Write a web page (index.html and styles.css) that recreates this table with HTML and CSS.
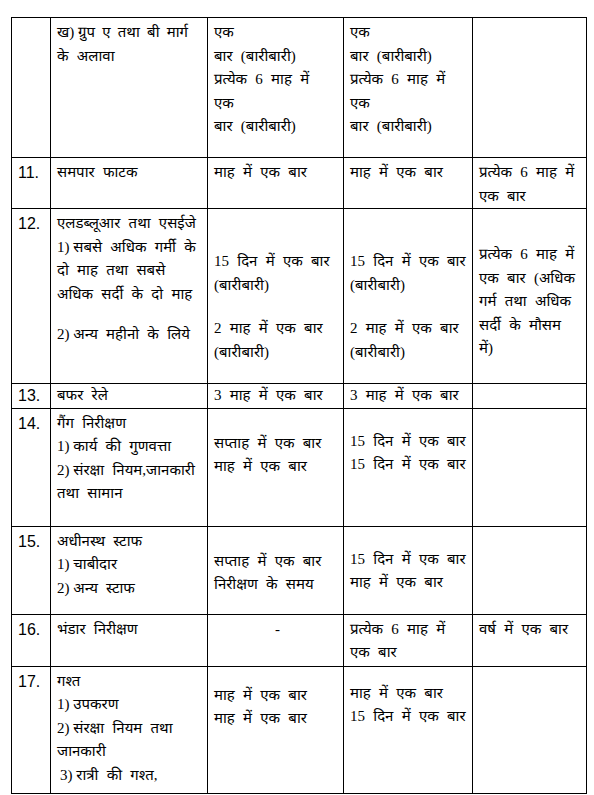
FILE: index.html
```html
<!DOCTYPE html>
<html lang="hi">
<head>
<meta charset="utf-8">
<title>निरीक्षण सारणी</title>
<link rel="stylesheet" href="styles.css">
</head>
<body>
<table class="sched">
  <colgroup>
    <col class="c-no">
    <col class="c-item">
    <col class="c-a">
    <col class="c-b">
    <col class="c-c">
  </colgroup>
  <tbody>
    <tr class="r1">
      <td class="no"></td>
      <td><div class="just"><span class="lbl">ख) </span>ग्रुप ए तथा बी मार्ग</div><div>के अलावा</div></td>
      <td><div>एक</div><div>बार (बारीबारी)</div><div>प्रत्येक 6 माह में</div><div>एक</div><div>बार (बारीबारी)</div></td>
      <td><div>एक</div><div>बार (बारीबारी)</div><div>प्रत्येक 6 माह में</div><div>एक</div><div>बार (बारीबारी)</div></td>
      <td></td>
    </tr>
    <tr class="r11">
      <td class="no">11.</td>
      <td><div>समपार फाटक</div></td>
      <td><div>माह में एक बार</div></td>
      <td><div>माह में एक बार</div></td>
      <td><div>प्रत्येक 6 माह में</div><div>एक बार</div></td>
    </tr>
    <tr class="r12">
      <td class="no">12.</td>
      <td><div>एलडब्लूआर तथा एसईजे</div><div><span class="lbl">1) </span>सबसे अधिक गर्मी के</div><div>दो माह तथा सबसे</div><div>अधिक सर्दी के दो माह</div><div class="gap"><span class="lbl">2) </span>अन्य महीनो के लिये</div></td>
      <td class="off-38"><div>15 दिन में एक बार</div><div>(बारीबारी)</div><div class="gap2">2 माह में एक बार</div><div>(बारीबारी)</div></td>
      <td class="off-38"><div>15 दिन में एक बार</div><div>(बारीबारी)</div><div class="gap2">2 माह में एक बार</div><div>(बारीबारी)</div></td>
      <td class="off-31"><div>प्रत्येक 6 माह में</div><div>एक बार (अधिक</div><div>गर्म तथा अधिक</div><div>सर्दी के मौसम</div><div>में)</div></td>
    </tr>
    <tr class="r13">
      <td class="no">13.</td>
      <td><div>बफर रेले</div></td>
      <td><div>3 माह में एक बार</div></td>
      <td><div>3 माह में एक बार</div></td>
      <td></td>
    </tr>
    <tr class="r14">
      <td class="no">14.</td>
      <td><div>गैंग निरीक्षण</div><div><span class="lbl">1) </span>कार्य की गुणवत्ता</div><div><span class="lbl">2) </span>संरक्षा नियम,जानकारी</div><div>तथा सामान</div></td>
      <td class="off-20"><div>सप्ताह में एक बार</div><div>माह में एक बार</div></td>
      <td class="off-18"><div>15 दिन में एक बार</div><div>15 दिन में एक बार</div></td>
      <td></td>
    </tr>
    <tr class="r15">
      <td class="no">15.</td>
      <td><div>अधीनस्थ स्टाफ</div><div><span class="lbl">1) </span>चाबीदार</div><div><span class="lbl">2) </span>अन्य स्टाफ</div></td>
      <td class="off-20"><div>सप्ताह में एक बार</div><div>निरीक्षण के समय</div></td>
      <td class="off-18"><div>15 दिन में एक बार</div><div>माह में एक बार</div></td>
      <td></td>
    </tr>
    <tr class="r16">
      <td class="no">16.</td>
      <td><div>भंडार निरीक्षण</div></td>
      <td class="center"><div>-</div></td>
      <td><div>प्रत्येक 6 माह में</div><div>एक बार</div></td>
      <td><div>वर्ष में एक बार</div></td>
    </tr>
    <tr class="r17">
      <td class="no">17.</td>
      <td><div>गश्त</div><div><span class="lbl">1) </span>उपकरण</div><div><span class="lbl">2) </span>संरक्षा नियम तथा</div><div>जानकारी</div><div class="indent"><span class="lbl">3) </span>रात्री की गश्त,</div></td>
      <td class="off-14"><div>माह में एक बार</div><div>माह में एक बार</div></td>
      <td class="off-12"><div>माह में एक बार</div><div>15 दिन में एक बार</div></td>
      <td></td>
    </tr>
  </tbody>
</table>
</body>
</html>
```

FILE: styles.css
```css
html, body {
  margin: 0;
  padding: 0;
  background: #ffffff;
}

body {
  font-family: "Liberation Serif", "Noto Sans Devanagari", "Lohit Devanagari", "Noto Sans", sans-serif;
  font-size: 15px;
  color: #000000;
}

.sched {
  margin: 17px 0 0 11px;
  border-collapse: collapse;
  table-layout: fixed;
  width: 575px;
}

.c-no { width: 39px; }
.c-item { width: 157px; }
.c-a { width: 136px; }
.c-b { width: 129px; }
.c-c { width: 114px; }

.sched td {
  border: 1.5px solid #000000;
  vertical-align: top;
  padding: 3px 2px 0 6px;
  line-height: 23.5px;
  white-space: nowrap;
  overflow: hidden;
  word-spacing: 4.5px;
}

.sched td.no {
  font-family: "Liberation Sans", Arial, sans-serif;
  font-size: 16px;
  padding-left: 6px;
  word-spacing: 0;
}

.r1 { height: 140px; }
.r11 { height: 48px; }
.r12 { height: 175px; }
.r13 { height: 24px; }
.r14 { height: 118px; }
.r15 { height: 88px; }
.r16 { height: 52px; }
.r17 { height: 127px; }

.r13 td {
  padding-top: 0;
  vertical-align: middle;
}

.sched td.off-12 { padding-top: 15px; }
.sched td.off-14 { padding-top: 17px; }
.sched td.off-18 { padding-top: 21px; }
.sched td.off-20 { padding-top: 23px; }
.sched td.off-31 { padding-top: 34px; }
.sched td.off-38 { padding-top: 41px; }

.sched td.center { text-align: center; }

.gap { margin-top: 17px; }
.gap2 { margin-top: 20px; }
.indent { padding-left: 3px; }

.sched td .just {
  word-spacing: 3.5px;
}

.sched td .lbl {
  word-spacing: 0;
}
```
